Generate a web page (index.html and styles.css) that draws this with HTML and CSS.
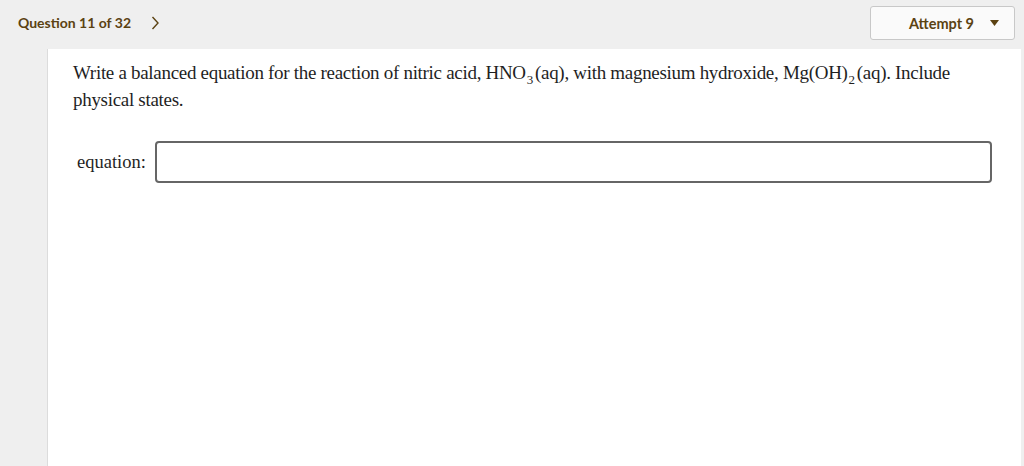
FILE: index.html
```html
<!DOCTYPE html>
<html>
<head>
<meta charset="utf-8">
<link rel="stylesheet" href="styles.css">
</head>
<body>
<div class="page">
  <header class="topbar">
    <div class="qnav">
      <span class="qtitle">Question 11 of 32</span>
      <svg class="chev" width="10" height="14" viewBox="0 0 10 14"><path d="M2.5 1 L8 7 L2.5 13" fill="none" stroke="#5b4212" stroke-width="1.4"/></svg>
    </div>
    <button class="attempt">
      <span>Attempt 9</span>
      <svg class="caret" width="9" height="6" viewBox="0 0 9 6"><path d="M0 0 H9 L4.5 6 Z" fill="#5b4212"/></svg>
    </button>
  </header>
  <main class="card">
    <p class="question">Write a balanced equation for the reaction of nitric acid, HNO<sub>3</sub>(aq), with magnesium hydroxide, Mg(OH)<sub>2</sub>(aq). Include<br>physical states.</p>
    <div class="answer">
      <label class="label">equation:</label>
      <div class="input"></div>
    </div>
  </main>
</div>
</body>
</html>
```
FILE: styles.css
```css
html, body {
  margin: 0;
  padding: 0;
  background: #efefef;
  width: 1024px;
  height: 466px;
  overflow: hidden;
}
.page {
  display: flex;
  flex-direction: column;
  height: 466px;
}
.topbar {
  height: 49px;
  display: flex;
  align-items: flex-start;
  justify-content: space-between;
  padding: 0 9px 0 18px;
  font-family: "Lato", sans-serif;
  color: #5b4212;
}
.qnav {
  display: flex;
  align-items: center;
  gap: 19px;
  margin-top: 14px;
}
.qtitle {
  font-size: 14px;
  font-weight: 700;
}
.chev { display: block; }
.attempt {
  margin-top: 6px;
  width: 145px;
  height: 34px;
  background: #fafafa;
  border: 1px solid #c8c8c8;
  border-radius: 3px;
  display: flex;
  align-items: center;
  justify-content: flex-end;
  gap: 16px;
  padding: 0 15px 0 0;
  font-family: "Lato", sans-serif;
  font-size: 14.5px;
  font-weight: 700;
  color: #5b4212;
}
.caret { display: block; }
.card {
  flex: 1;
  margin-left: 47px;
  margin-right: 3px;
  background: #ffffff;
  border-left: 1px solid #dcdcdc;
  padding: 10px 0 0 25px;
  font-family: "Liberation Serif", "Times New Roman", serif;
  color: #1f1f1f;
}
.question {
  margin: 0;
  width: 890px;
  font-size: 19px;
  line-height: 27px;
  letter-spacing: -0.3px;
}
.question sub {
  display: inline-block;
  font-size: 13px;
  line-height: 10px;
  vertical-align: -5px;
  margin: 0 2px 0 1px;
}
.answer {
  display: flex;
  align-items: center;
  gap: 9px;
  margin-top: 28px;
  padding-left: 4px;
}
.label {
  font-size: 18.5px;
}
.input {
  width: 833px;
  height: 38px;
  border: 2px solid #666;
  border-radius: 4px;
  background: #fff;
}
```
